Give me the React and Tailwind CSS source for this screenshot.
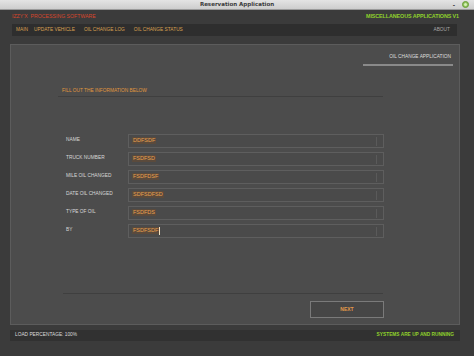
import React from "react";

const rows = [
  ["NAME", "DDFSDF"],
  ["TRUCK NUMBER", "FSDFSD"],
  ["MILE OIL CHANGED", "FSDFDSF"],
  ["DATE OIL CHANGED", "SDFSDFSD"],
  ["TYPE OF OIL", "FSDFDS"],
  ["BY", "FSDFSDF"],
];

export default function App() {
  return (
    <div
      className="w-[474px] h-[356px] bg-[#3b3b3b] flex flex-col overflow-hidden"
      style={{ fontFamily: '"Liberation Sans", Arial, sans-serif' }}
    >
      {/* title bar */}
      <div className="h-[10px] bg-gradient-to-b from-[#e4e4e4] to-[#cdcdcd] flex items-center relative border-b border-[#9a9a9a]">
        <div
          className="flex-1 text-center text-[5.5px] font-bold text-[#3a3a3a] leading-none"
          style={{ fontFamily: '"DejaVu Sans", sans-serif' }}
        >
          Reservation Application
        </div>
        <div className="absolute right-[5px] top-0 h-full flex items-center gap-[7px]">
          <span className="text-[7px] font-bold text-[#444] leading-none">-</span>
          <span className="w-[7px] h-[7px] rounded-full bg-[#8fc45a] border border-[#6a9c3a] flex items-center justify-center">
            <span className="w-[3px] h-[3px] rounded-full bg-[#d6f0b8]" />
          </span>
        </div>
      </div>

      {/* header */}
      <div className="h-[14px] pl-[12px] pr-[15px] flex items-center justify-between">
        <span className="text-[5.2px] text-[#d8462c] leading-none">IZZY'X&nbsp; PROCESSING SOFTWARE</span>
        <span className="text-[5.4px] font-bold text-[#8fd12c] leading-none tracking-[-0.1px]">MISCELLANEOUS APPLICATIONS V1</span>
      </div>

      {/* menu */}
      <div className="mx-[12px] mr-[17px] h-[12px] bg-[#2e2e2e] flex items-center px-[4px] text-[4.8px] leading-none">
        <span className="text-[#d9a050] mr-[6px]">MAIN</span>
        <span className="text-[#d9a050] mr-[9px]">UPDATE VEHICLE</span>
        <span className="text-[#d9a050] mr-[9px]">OIL CHANGE LOG</span>
        <span className="text-[#d9a050]">OIL CHANGE STATUS</span>
        <span className="ml-auto text-[#a8a8a8] mr-[3px]">ABOUT</span>
      </div>

      <div className="h-[8px]" />

      {/* panel */}
      <div className="ml-[10px] mr-[14px] h-[281px] bg-[#4c4c4c] border border-[#5c5c5c] flex flex-col">
        <div className="flex justify-end pr-[6px] pt-[10px]">
          <div className="flex flex-col items-end">
            <span className="text-[4.8px] text-[#dedede] leading-none pr-[2px]">OIL CHANGE APPLICATION</span>
            <div className="w-[90px] h-[2px] bg-[#8a8a8a] mt-[4px]" />
          </div>
        </div>

        <div className="pl-[50px] mt-[23px]">
          <div className="pl-[1px] text-[4.8px] text-[#e0983e] leading-none">FILL OUT THE INFORMATION BELOW</div>
          <div className="w-[325px] h-px bg-[#3f3f3f] mt-[2px] -ml-[3px]" />
        </div>

        <div className="flex flex-col gap-[4px] mt-[37px] pl-[55px]">
          {rows.map(([label, value], i) => (
            <div key={label} className="flex items-center h-[14px]">
              <span className="w-[62px] text-[4.8px] text-[#d8d8d8] leading-none">{label}</span>
              <div className="w-[256px] h-[14px] bg-[#4a4a4a] border border-[#5e5e5e] flex items-center pl-[3px] relative">
                <span className="text-[5.5px] text-[#eaa04c] bg-[#5a4a3c] px-px leading-[7px]">{value}</span>
                {i === 5 && <span className="w-px h-[8px] bg-[#f0e0c0]" />}
                <span className="absolute right-[6px] top-[2px] w-px h-[9px] bg-[#5a5a5a]" />
              </div>
            </div>
          ))}
        </div>

        <div className="ml-[52px] w-[320px] h-px bg-[#3f3f3f] mt-[55px]" />

        <div className="flex justify-end mr-[75px] mt-[7px]">
          <div className="w-[74px] h-[17px] border border-[#7a7a7a] bg-[#464646] flex items-center justify-center">
            <span className="text-[5px] font-bold text-[#e39a4a] leading-none">NEXT</span>
          </div>
        </div>
      </div>

      <div className="h-[5px]" />

      {/* status bar */}
      <div className="ml-[10px] mr-[14px] h-[11px] bg-[#313131] flex items-center justify-between pl-[5px] pr-[6px]">
        <span className="text-[4.8px] text-[#dcdcdc] leading-none">LOAD PERCENTAGE: 100%</span>
        <span className="text-[4.8px] font-bold text-[#8fd12c] leading-none">SYSTEMS ARE UP AND RUNNING</span>
      </div>
    </div>
  );
}
